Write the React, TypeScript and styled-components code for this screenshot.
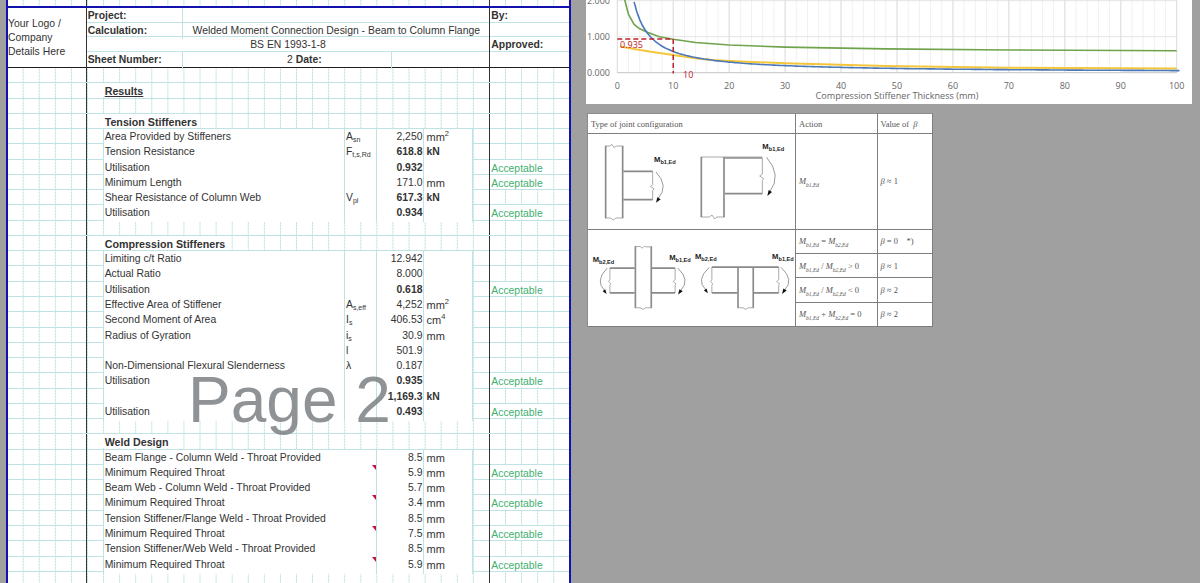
import * as React from "react";
import styled, { createGlobalStyle } from "styled-components";

const TEAL = "#bfe3e5";
const BLUE = "#1212ae";

const GlobalStyle = createGlobalStyle`
  html, body {
    margin: 0;
    padding: 0;
    width: 1200px;
    height: 583px;
    overflow: hidden;
    background: #a0a0a0;
  }
`;

const Page = styled.div`
  display: flex;
  align-items: flex-start;
  gap: 15.5px;
  height: 583px;
  padding-left: 6px;
  box-sizing: border-box;
  overflow: hidden;
  font-family: "Liberation Sans", Arial, sans-serif;
  font-size: 10.4px;
  color: #333;
`;

const Sheet = styled.div`
  position: relative;
  flex: none;
  width: 564.5px;
  height: 583px;
  box-sizing: border-box;
  overflow: hidden;
  border-left: 2px solid ${BLUE};
  border-right: 2px solid ${BLUE};
  background-color: #fff;
  background-image: repeating-linear-gradient(
      to bottom,
      transparent 0 2px,
      rgba(255, 255, 255, 0.5) 2px 3px
    ),
    linear-gradient(to right, ${TEAL} 1px, transparent 1px);
  background-size: 100% 100%, 16.08px 100%;
  background-position: 0 0, 14.7px 0;
`;

const Row = styled.div`
  display: grid;
  grid-template-columns: 78.7px 16px 242.3px 31.7px 47.8px 48.2px 16.6px 79.2px;
  height: 15.28px;
  box-sizing: border-box;
  border-bottom: 1px solid ${TEAL};
  line-height: 16px;
  white-space: nowrap;
`;

const TopStrip = styled(Row)`
  height: 8px;
  border-bottom: 2px solid ${BLUE};
`;

const Margin = styled.div`
  border-right: 1px solid #333;
`;

const Gap = styled.div`
  grid-column: 3 / 8;
`;

const Label = styled.div<{ $wide?: boolean }>`
  position: relative;
  grid-column: ${(p) => (p.$wide ? "3 / 5" : "3")};
  padding-left: 1px;
  background: #fff;
  border-left: 1px solid ${TEAL};
  border-right: 1px solid ${TEAL};
`;

const Heading = styled.div`
  grid-column: 3 / 8;
`;

const HeadingText = styled.span<{ $underline?: boolean }>`
  display: inline-block;
  height: 14px;
  padding: 0 3px 0 2px;
  background: #fff;
  font-weight: 700;
  font-size: 10.7px;
  text-decoration: ${(p) => (p.$underline ? "underline" : "none")};
`;

const Symbol = styled.div`
  padding-left: 1px;
  background: #fff;
  border-right: 1px solid ${TEAL};

  sub {
    font-size: 7px;
    line-height: 0;
    vertical-align: -1.5px;
  }
`;

const Value = styled.div<{ $bold?: boolean }>`
  padding-right: 1px;
  background: #fff;
  border-right: 1px solid ${TEAL};
  text-align: right;
  font-weight: ${(p) => (p.$bold ? 700 : 400)};
`;

const Unit = styled.div<{ $bold?: boolean }>`
  padding-left: 2px;
  background: #fff;
  border-right: 1px solid ${TEAL};
  font-weight: ${(p) => (p.$bold ? 700 : 400)};
  font-size: ${(p) => (p.$bold ? "10.4px" : "11px")};

  sup {
    font-size: 7.5px;
    line-height: 0;
  }
`;

const Tail = styled.div``;

const Status = styled.div`
  grid-column: 8;
  border-left: 1px solid #333;
  padding-left: 1px;
`;

const Acceptable = styled.span`
  display: inline-block;
  height: 14px;
  padding-right: 4px;
  background: #fff;
  color: #3fb070;
  line-height: 17px;
`;

const CommentMark = styled.i`
  position: absolute;
  top: 0;
  right: 0;
  width: 0;
  height: 0;
  border-top: 5px solid #c8143c;
  border-left: 4px solid transparent;
`;

const Header = styled.div`
  display: grid;
  grid-template-columns: 78.7px 402.6px 79.2px;
  height: 60px;
  box-sizing: border-box;
  border-bottom: 1.5px solid #1c1c1c;
  background: #fff;
`;

const Logo = styled.div`
  padding: 9px 0 0 0;
  border-right: 1px solid #333;
  line-height: 14px;
`;

const HeaderLines = styled.div`
  display: grid;
  grid-template-rows: 14.7px 14.6px 15px 1fr;
`;

const SideLines = styled(HeaderLines)`
  border-left: 1px solid #333;
`;

const HeaderLine = styled.div<{ $split?: boolean; $last?: boolean }>`
  display: grid;
  grid-template-columns: ${(p) =>
    p.$split ? "96.6px 110.4px 98.6px 1fr" : "96.6px 1fr"};
  box-sizing: border-box;
  border-bottom: ${(p) => (p.$last ? "none" : `1px solid ${TEAL}`)};
  line-height: 16.5px;
  white-space: nowrap;
`;

const HeaderLabel = styled.div`
  padding-left: 1px;
  font-weight: 700;
  border-right: 1px solid ${TEAL};
`;

const HeaderPlain = styled.div`
  padding-left: 1px;
  font-weight: 700;
`;

const HeaderValue = styled.div`
  text-align: center;
`;

const HeaderMerged = styled.div`
  grid-column: 1 / -1;
  text-align: center;
`;

const SheetNumber = styled.div`
  padding-right: 1px;
  text-align: right;
`;

const DateCell = styled.div`
  padding-left: 2px;
  font-weight: 700;
  border-right: 1px solid ${TEAL};
`;

const Watermark = styled.div`
  position: absolute;
  left: 180px;
  top: 363px;
  font-size: 64px;
  line-height: 74px;
  color: rgba(118, 123, 126, 0.82);
  pointer-events: none;
`;

const RightColumn = styled.div`
  display: flex;
  flex-direction: column;
  align-items: flex-start;
  gap: 9px;
  flex: none;
`;

const ChartPanel = styled.div`
  width: 606px;
  height: 104px;
  background: #fff;

  svg {
    display: block;
  }
`;

const JointTable = styled.div`
  display: grid;
  grid-template-columns: 208px 81.5px 55px;
  grid-template-rows: 20px 95.5px repeat(4, 24.4px);
  margin-left: 1px;
  width: 346px;
  box-sizing: border-box;
  border: 1px solid #8c8c8c;
  border-right: 0;
  border-bottom: 0;
  background: #fff;
  font-family: "Liberation Serif", "Times New Roman", serif;
  font-size: 8.5px;
  color: #555;
`;

const TableCell = styled.div<{ $span?: number }>`
  display: flex;
  align-items: center;
  padding-left: 3px;
  box-sizing: border-box;
  border-right: 1px solid #7e7e7e;
  border-bottom: 1px solid #7e7e7e;
  white-space: pre;
  grid-row: ${(p) => (p.$span ? `span ${p.$span}` : "auto")};
`;

const DrawingCell = styled(TableCell)`
  padding: 0;

  svg {
    display: block;
  }
`;

const Formula = styled.i`
  sub {
    font-size: 5.5px;
    line-height: 0;
  }
`;

type Line =
  | { kind: "blank" }
  | { kind: "heading"; text: string; underline?: boolean }
  | {
      kind: "data";
      label?: string;
      symbol?: [string, string?];
      value?: string;
      unit?: string;
      sup?: string;
      bold?: boolean;
      ok?: boolean;
      wide?: boolean;
      comment?: boolean;
    };

const lines: Line[] = [
  { kind: "blank" },
  { kind: "heading", text: "Results", underline: true },
  { kind: "blank" },
  { kind: "heading", text: "Tension Stiffeners" },
  { kind: "data", label: "Area Provided by Stiffeners", symbol: ["A", "sn"], value: "2,250", unit: "mm", sup: "2" },
  { kind: "data", label: "Tension Resistance", symbol: ["F", "t,s,Rd"], value: "618.8", unit: "kN", bold: true },
  { kind: "data", label: "Utilisation", value: "0.932", bold: true, ok: true },
  { kind: "data", label: "Minimum Length", value: "171.0", unit: "mm", ok: true },
  { kind: "data", label: "Shear Resistance of Column Web", symbol: ["V", "pl"], value: "617.3", unit: "kN", bold: true },
  { kind: "data", label: "Utilisation", value: "0.934", bold: true, ok: true },
  { kind: "blank" },
  { kind: "heading", text: "Compression Stiffeners" },
  { kind: "data", label: "Limiting c/t Ratio", value: "12.942" },
  { kind: "data", label: "Actual Ratio", value: "8.000" },
  { kind: "data", label: "Utilisation", value: "0.618", bold: true, ok: true },
  { kind: "data", label: "Effective Area of Stiffener", symbol: ["A", "s,eff"], value: "4,252", unit: "mm", sup: "2" },
  { kind: "data", label: "Second Moment of Area", symbol: ["I", "s"], value: "406.53", unit: "cm", sup: "4" },
  { kind: "data", label: "Radius of Gyration", symbol: ["i", "s"], value: "30.9", unit: "mm" },
  { kind: "data", symbol: ["l"], value: "501.9" },
  { kind: "data", label: "Non-Dimensional Flexural Slenderness", symbol: ["λ"], value: "0.187" },
  { kind: "data", label: "Utilisation", value: "0.935", bold: true, ok: true },
  { kind: "data", value: "1,169.3", unit: "kN", bold: true },
  { kind: "data", label: "Utilisation", value: "0.493", bold: true, ok: true },
  { kind: "blank" },
  { kind: "heading", text: "Weld Design" },
  { kind: "data", wide: true, label: "Beam Flange - Column Weld - Throat Provided", value: "8.5", unit: "mm" },
  { kind: "data", wide: true, comment: true, label: "Minimum Required Throat", value: "5.9", unit: "mm", ok: true },
  { kind: "data", wide: true, label: "Beam Web - Column Weld - Throat Provided", value: "5.7", unit: "mm" },
  { kind: "data", wide: true, comment: true, label: "Minimum Required Throat", value: "3.4", unit: "mm", ok: true },
  { kind: "data", wide: true, label: "Tension Stiffener/Flange Weld - Throat Provided", value: "8.5", unit: "mm" },
  { kind: "data", wide: true, comment: true, label: "Minimum Required Throat", value: "7.5", unit: "mm", ok: true },
  { kind: "data", wide: true, label: "Tension Stiffener/Web Weld - Throat Provided", value: "8.5", unit: "mm" },
  { kind: "data", wide: true, comment: true, label: "Minimum Required Throat", value: "5.9", unit: "mm", ok: true },
  { kind: "blank" },
];

function SheetRow({ line }: { line: Line }) {
  if (line.kind === "blank") {
    return (
      <Row>
        <Margin />
        <div />
        <Gap />
        <Status />
      </Row>
    );
  }
  if (line.kind === "heading") {
    return (
      <Row>
        <Margin />
        <div />
        <Heading>
          <HeadingText $underline={line.underline}>{line.text}</HeadingText>
        </Heading>
        <Status />
      </Row>
    );
  }
  return (
    <Row>
      <Margin />
      <div />
      <Label $wide={line.wide}>
        {line.label}
        {line.comment && <CommentMark />}
      </Label>
      {!line.wide && (
        <Symbol>
          {line.symbol?.[0]}
          {line.symbol?.[1] && <sub>{line.symbol[1]}</sub>}
        </Symbol>
      )}
      <Value $bold={line.bold}>{line.value}</Value>
      <Unit $bold={line.bold}>
        {line.unit}
        {line.sup && <sup>{line.sup}</sup>}
      </Unit>
      <Tail />
      <Status>{line.ok && <Acceptable>Acceptable</Acceptable>}</Status>
    </Row>
  );
}

// chart scale: 5.594px per mm, 36px per unit of utilisation
const px = (t: number) => 31.3 + t * 5.594;
const py = (u: number) => 72.7 - u * 36;
const toPoints = (data: number[][]) =>
  data.map(([t, u]) => `${px(t).toFixed(1)},${py(u).toFixed(1)}`).join(" ");

const thickness = Array.from({ length: 200 }, (_, i) => 1 + i * 0.5);
const blueCurve = thickness.filter((t) => t >= 2.6).map((t) => [t, 5.9 / t]);
const greenCurve = [
  [1.2, 2.1], [2, 1.62], [3, 1.34], [4, 1.22], [5.5, 1.12], [7.5, 1.0], [10, 0.93],
  [14, 0.84], [20, 0.77], [30, 0.71], [48, 0.66], [70, 0.63], [100, 0.61],
];
const yellowCurve = [
  [0.5, 0.73], [3, 0.66], [6, 0.58], [10, 0.49], [14, 0.4], [17, 0.35], [22, 0.31],
  [30, 0.26], [48, 0.19], [70, 0.14], [100, 0.12],
];

function Chart() {
  const minor = Array.from({ length: 51 }, (_, i) => i * 2);
  const major = Array.from({ length: 11 }, (_, i) => i * 10);
  return (
    <svg width="606" height="104" viewBox="0 0 606 104">
      {minor.map((t) => (
        <line key={t} x1={px(t)} x2={px(t)} y1="0" y2="72.7" stroke="#f1f1f1" strokeWidth="1" />
      ))}
      {major.map((t) => (
        <line key={t} x1={px(t)} x2={px(t)} y1="0" y2="72.7" stroke="#dedede" strokeWidth="1" />
      ))}
      <line x1={px(0)} x2={px(100)} y1={py(1)} y2={py(1)} stroke="#e4e4e4" />
      <line x1={px(0)} x2={px(100)} y1={py(2)} y2={py(2)} stroke="#e4e4e4" />
      <line x1={px(0)} x2={px(100)} y1={py(0)} y2={py(0)} stroke="#c4c4c4" />
      <polyline points={toPoints(yellowCurve)} fill="none" stroke="#f4c63c" strokeWidth="2" />
      <polyline points={toPoints(greenCurve)} fill="none" stroke="#6fa34c" strokeWidth="1.6" />
      <polyline points={toPoints(blueCurve)} fill="none" stroke="#4a78b8" strokeWidth="1.6" />
      <polyline
        points={`${px(0)},${py(0.935)} ${px(10)},${py(0.935)} ${px(10)},${py(-0.02)}`}
        fill="none"
        stroke="#c0202c"
        strokeWidth="1.5"
        strokeDasharray="5 3"
      />
      <g fontFamily="'Open Sans', sans-serif" fontSize="9" fill="#666">
        <text x="1" y="4">2.000</text>
        <text x="1" y="40">1.000</text>
        <text x="1" y="76">0.000</text>
        {major.map((t) => (
          <text key={t} x={px(t)} y="89" textAnchor="middle">{t}</text>
        ))}
        <text x="311" y="99" textAnchor="middle" fontSize="9.1">Compression Stiffener Thickness (mm)</text>
      </g>
      <g fontFamily="'Open Sans', sans-serif" fontSize="9" fill="#c0202c">
        <text x="34" y="48">0.935</text>
        <text x="97" y="77.5">10</text>
      </g>
    </svg>
  );
}

function Moment({ x, y, sub }: { x: number; y: number; sub: string }) {
  return (
    <text x={x} y={y} fontFamily="'Liberation Sans', sans-serif" fontWeight="700" fontSize="23" fill="#222">
      M<tspan fontSize="17" dy="6">{sub}</tspan>
    </text>
  );
}

function Arc({ d, tip }: { d: string; tip: string }) {
  return (
    <g>
      <path d={d} fill="none" stroke="#666" strokeWidth="2" />
      <polygon points={tip} fill="#111" />
    </g>
  );
}

const steel = { fill: "none", stroke: "#8a8a8a", strokeWidth: 5 };
const breakLine = { fill: "none", stroke: "#808080", strokeWidth: 2 };

function UpperJoints() {
  return (
    <svg width="207" height="95" viewBox="24 76 621 285">
      <path d="M77 112V328M128 112V328" {...steel} />
      <path d="M75 112H90l6 -5l6 10l5 -5H130M75 328H92l8 6l8 -6H130" {...breakLine} />
      <path d="M130 188H218M130 273H218" {...steel} />
      <path d="M218 188V228l-6 6l10 6l-4 6V273" {...breakLine} />
      <Arc d="M228 190Q268 232 234 270" tip="228,282 232,266 242,272" />
      <Moment x={222} y={160} sub="b1,Ed" />

      <path d="M364 145V325M432 145V325" {...steel} />
      <path d="M362 145H547M362 325H388l8 -6l8 12l6 -6H435" {...breakLine} />
      <path d="M435 148H547M435 255H547" {...steel} />
      <path d="M547 148V196l-8 6l12 8l-4 6V255" {...breakLine} />
      <Arc d="M560 146Q606 200 570 248" tip="562,262 566,244 576,250" />
      <Moment x={547} y={122} sub="b1,Ed" />
    </svg>
  );
}

function LowerJoints() {
  return (
    <svg width="207" height="97" viewBox="24 12 621 293">
      <path d="M165 65V250M213 65V250" {...steel} />
      <path d="M163 65H180l6 5l6 -6l6 2H215M163 250H180l8 5l8 -5H215" {...breakLine} />
      <path d="M88 130H163M88 205H163M215 130H285M215 205H285" {...steel} />
      <path d="M88 130V165l-4 6l6 6l-2 6V205M285 130V165l-6 6l8 6l-2 6V205" {...breakLine} />
      <Arc d="M80 130Q42 168 72 198" tip="78,208 66,200 74,194" />
      <Arc d="M293 130Q332 166 302 198" tip="294,210 298,194 308,200" />
      <Moment x={36} y={112} sub="b2,Ed" />
      <Moment x={267} y={106} sub="b1,Ed" />

      <path d="M475 127V250M521 127V250" {...steel} />
      <path d="M473 250H490l8 5l8 -5H523" {...breakLine} />
      <path d="M396 127H598M396 205H473M523 205H598" {...steel} />
      <path d="M396 127V165l-4 6l6 6l-2 6V205M598 127V165l-6 6l8 6l-2 6V205" {...breakLine} />
      <Arc d="M388 128Q346 166 378 196" tip="384,206 372,198 380,192" />
      <Arc d="M605 128Q646 166 616 196" tip="608,208 612,192 622,198" />
      <Moment x={345} y={103} sub="b2,Ed" />
      <Moment x={578} y={103} sub="b1,Ed" />
    </svg>
  );
}

const Mb1 = () => (
  <Formula>
    M<sub>b1,Ed</sub>
  </Formula>
);
const Mb2 = () => (
  <Formula>
    M<sub>b2,Ed</sub>
  </Formula>
);

export default function App() {
  return (
    <>
      <GlobalStyle />
      <Page>
        <Sheet>
          <TopStrip>
            <Margin />
            <div />
            <Gap />
            <Status />
          </TopStrip>
          <Header>
            <Logo>
              Your Logo /
              <br />
              Company
              <br />
              Details Here
            </Logo>
            <HeaderLines>
              <HeaderLine>
                <HeaderLabel>Project:</HeaderLabel>
              </HeaderLine>
              <HeaderLine>
                <HeaderLabel>Calculation:</HeaderLabel>
                <HeaderValue>Welded Moment Connection Design - Beam to Column Flange</HeaderValue>
              </HeaderLine>
              <HeaderLine>
                <HeaderMerged>BS EN 1993-1-8</HeaderMerged>
              </HeaderLine>
              <HeaderLine $split $last>
                <HeaderLabel>Sheet Number:</HeaderLabel>
                <SheetNumber>2</SheetNumber>
                <DateCell>Date:</DateCell>
              </HeaderLine>
            </HeaderLines>
            <SideLines>
              <HeaderLine>
                <HeaderPlain>By:</HeaderPlain>
              </HeaderLine>
              <HeaderLine />
              <HeaderLine>
                <HeaderPlain>Approved:</HeaderPlain>
              </HeaderLine>
              <HeaderLine $last />
            </SideLines>
          </Header>
          {lines.map((line, i) => (
            <SheetRow key={i} line={line} />
          ))}
          <Watermark>Page 2</Watermark>
        </Sheet>
        <RightColumn>
          <ChartPanel>
            <Chart />
          </ChartPanel>
          <JointTable>
            <TableCell>Type of joint configuration</TableCell>
            <TableCell>Action</TableCell>
            <TableCell>
              Value of <i> β</i>
            </TableCell>
            <DrawingCell>
              <UpperJoints />
            </DrawingCell>
            <TableCell>
              <Mb1 />
            </TableCell>
            <TableCell>
              <i>β</i> ≈ 1
            </TableCell>
            <DrawingCell $span={4}>
              <LowerJoints />
            </DrawingCell>
            <TableCell>
              <Mb1 /> = <Mb2 />
            </TableCell>
            <TableCell>
              <i>β</i> = 0{"    "}*)
            </TableCell>
            <TableCell>
              <Mb1 /> / <Mb2 /> &gt; 0
            </TableCell>
            <TableCell>
              <i>β</i> ≈ 1
            </TableCell>
            <TableCell>
              <Mb1 /> / <Mb2 /> &lt; 0
            </TableCell>
            <TableCell>
              <i>β</i> ≈ 2
            </TableCell>
            <TableCell>
              <Mb1 /> + <Mb2 /> = 0
            </TableCell>
            <TableCell>
              <i>β</i> ≈ 2
            </TableCell>
          </JointTable>
        </RightColumn>
      </Page>
    </>
  );
}
